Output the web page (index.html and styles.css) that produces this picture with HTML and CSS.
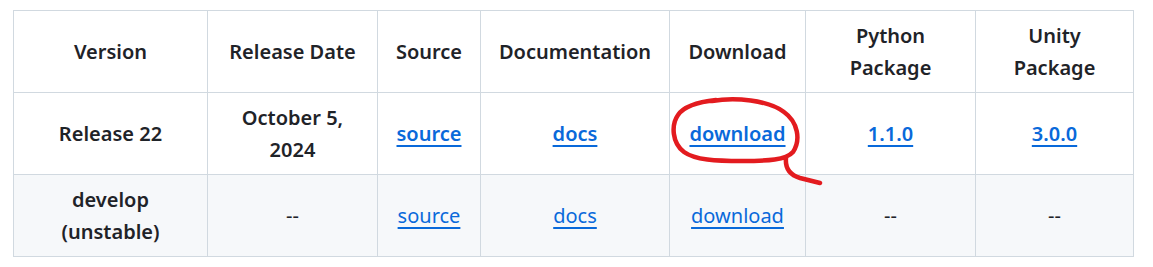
FILE: index.html
```html
<!DOCTYPE html>
<html lang="en">
<head>
<meta charset="utf-8">
<title>Releases</title>
<link rel="stylesheet" href="styles.css">
</head>
<body>
<div class="page">
  <div class="table-wrap">
    <table class="releases">
      <colgroup>
        <col class="c-version">
        <col class="c-date">
        <col class="c-source">
        <col class="c-docs">
        <col class="c-download">
        <col class="c-python">
        <col class="c-unity">
      </colgroup>
      <thead>
        <tr>
          <th>Version</th>
          <th>Release Date</th>
          <th>Source</th>
          <th>Documentation</th>
          <th>Download</th>
          <th>Python Package</th>
          <th>Unity Package</th>
        </tr>
      </thead>
      <tbody>
        <tr class="stable">
          <td>Release 22</td>
          <td>October 5, 2024</td>
          <td><a href="#">source</a></td>
          <td><a href="#">docs</a></td>
          <td><a href="#">download</a></td>
          <td><a href="#">1.1.0</a></td>
          <td><a href="#">3.0.0</a></td>
        </tr>
        <tr class="dev">
          <td class="name">develop (unstable)</td>
          <td>--</td>
          <td><a href="#">source</a></td>
          <td><a href="#">docs</a></td>
          <td><a href="#">download</a></td>
          <td>--</td>
          <td>--</td>
        </tr>
      </tbody>
    </table>
    <svg class="scribble" width="1153" height="267" viewBox="0 0 1153 267" aria-hidden="true">
      <path d="M712 101 C735 97 768 100 784 112 C798 122 801 140 793 152 C786 160 768 161 742 161 C716 161 695 160 684 152 C672 143 671 125 678 115 C684 106 697 102 716 100 M786 158 C785 168 790 175 800 178 L820 183" fill="none" stroke="#e31b1f" stroke-width="4.5" stroke-linecap="round" stroke-linejoin="round"/>
    </svg>
  </div>
</div>
</body>
</html>
```

FILE: styles.css
```css
html, body {
  margin: 0;
  padding: 0;
  background: #ffffff;
}

.page {
  padding: 10px 0 0 13px;
}

.table-wrap {
  position: relative;
  width: 1120px;
}

.releases {
  border-collapse: collapse;
  table-layout: fixed;
  width: 1120px;
  font-family: "Noto Sans", "Open Sans", "DejaVu Sans", sans-serif;
  font-size: 20px;
  line-height: 32px;
  color: #1f2328;
}

.c-version { width: 194px; }
.c-date { width: 170px; }
.c-source { width: 103px; }
.c-docs { width: 189px; }
.c-download { width: 136px; }
.c-python { width: 170px; }
.c-unity { width: 158px; }

.releases th,
.releases td {
  border: 1px solid #d1d9e0;
  padding: 8.5px 17px;
  text-align: center;
  vertical-align: middle;
}

.releases th {
  font-weight: 600;
}

.releases a {
  color: #0969da;
  text-decoration: underline;
  text-underline-offset: 4px;
  text-decoration-thickness: 2px;
}

.stable td {
  font-weight: 600;
}

.dev td {
  background: #f6f8fa;
  font-weight: 400;
}

.dev td.name {
  font-weight: 600;
}

.scribble {
  position: absolute;
  left: -13px;
  top: -10px;
  pointer-events: none;
}
```
